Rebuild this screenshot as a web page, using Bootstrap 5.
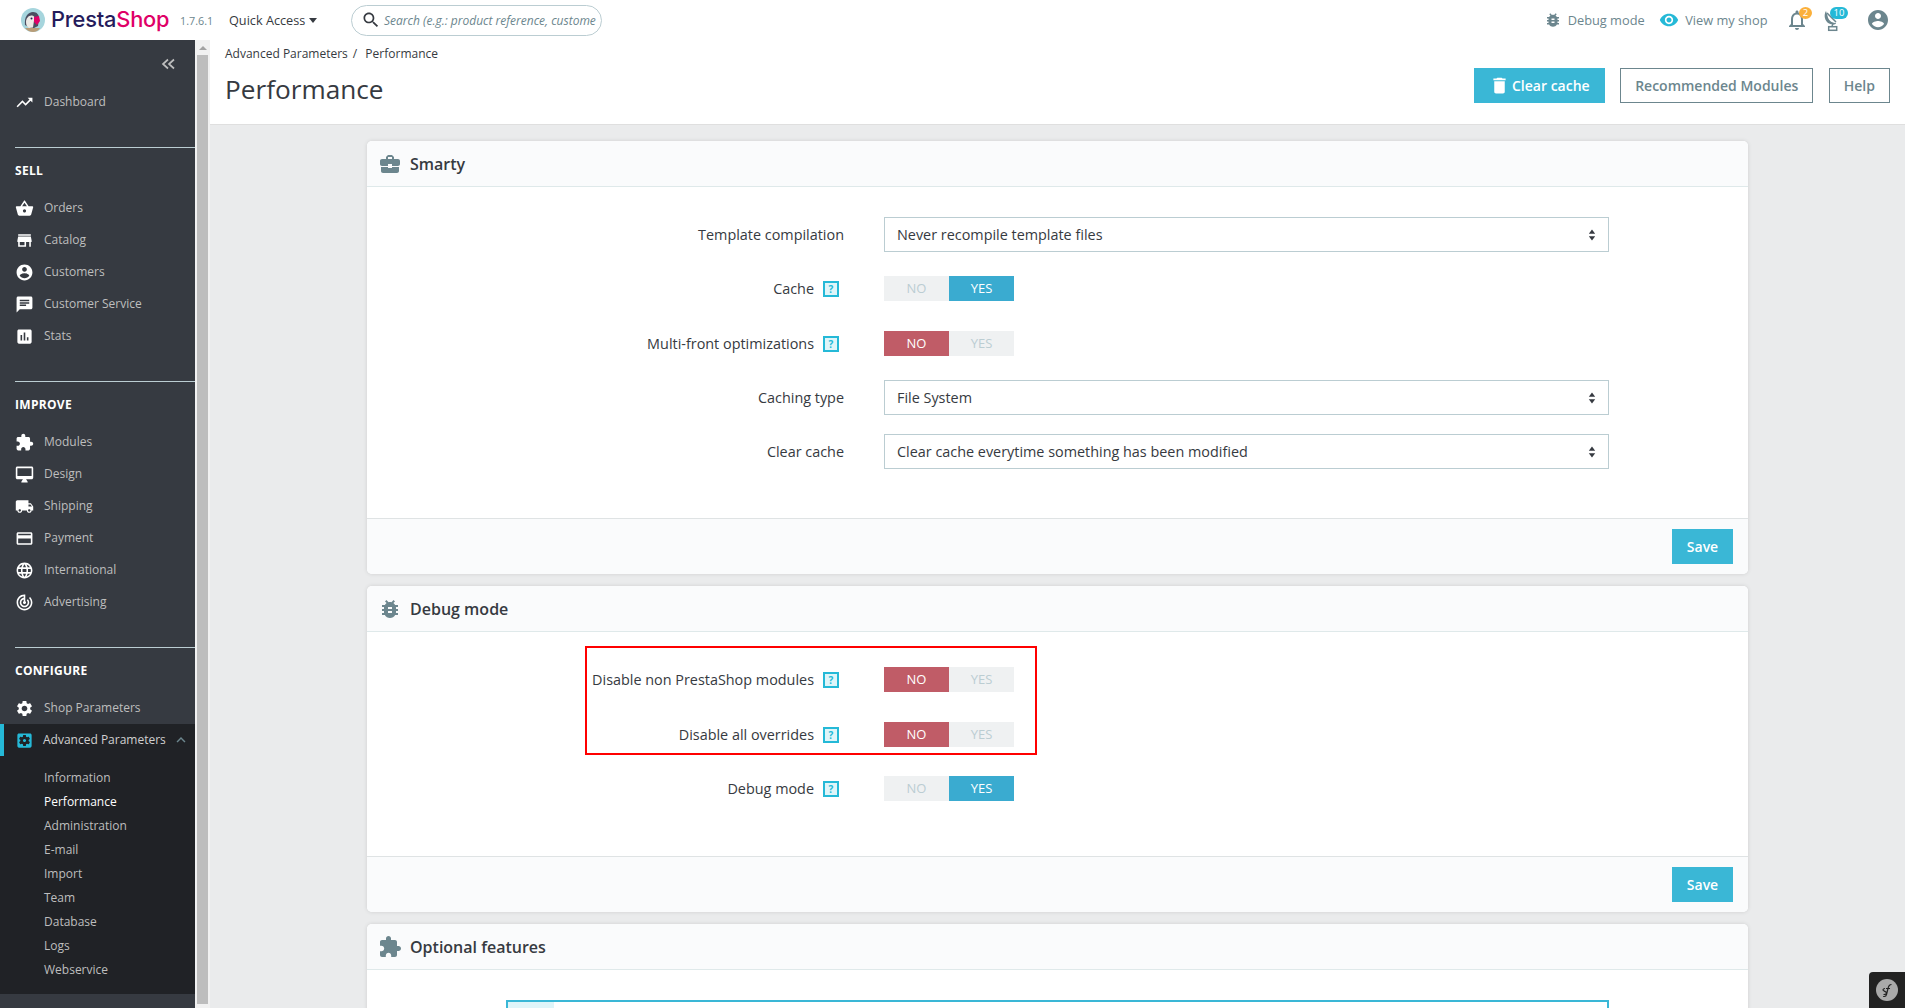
<!DOCTYPE html>
<html lang="en">
<head>
<meta charset="utf-8">
<title>Performance</title>
<link href="https://cdn.jsdelivr.net/npm/bootstrap@5.3.0/dist/css/bootstrap.min.css" rel="stylesheet">
<style>
html,body{height:100%;overflow:hidden}
body{font-family:"Open Sans","Liberation Sans",sans-serif;font-size:14px;color:#363a41;background:#eaebec}
.ic{width:1em;height:1em;fill:currentColor;flex:none;display:block}
.pg{height:100vh}
.topbar{height:40px;flex:none;background:#fff;padding-left:21px}
.brand{font-family:"Inter","Open Sans",sans-serif;font-size:21.8px;font-weight:500;line-height:1;margin-left:6px;width:123px;color:#251b5b;letter-spacing:-.2px}
.brand em{font-style:normal;color:#df0067}
.ver{font-size:10.8px;color:#6c868e;margin-left:6px;width:37px;padding-top:3px}
.quick{font-size:12.7px;color:#363a41;margin-left:12px;width:122px;padding-top:2px}
.caretx{display:inline-block;border:4.5px solid transparent;border-top:5px solid #363a41;border-bottom:0;margin-left:4px;vertical-align:2px}
.srch{width:251px;height:31px;border:1px solid #bbcdd2;border-radius:16px;padding:0 6px 0 9px;white-space:nowrap}
.srch svg{font-size:20px;color:#363a41;margin-right:3px}
.srch span{font-style:italic;font-size:12px;color:#6c868e;padding-top:2px}
.topr{font-size:12.8px;color:#6c868e}
.topr .tic{font-size:18px;margin-top:-2px}
.dbg{margin-right:14.5px;padding-top:2px}
.dbg svg{margin-right:6px}
.shopv{margin-right:17.5px;padding-top:2px}
.shopv svg{color:#25b9d7;margin-right:6px;font-size:20px!important}
.nic{position:relative;width:24px;height:24px;margin-right:11px}
.nic2{margin-right:22px}
.nic svg{font-size:24px}
.bdg{position:absolute;font-size:9.5px;text-align:center;color:#fff;top:-1px;height:12px;line-height:12px}
.bdg1{left:14px;background:#fbb03b;width:13px;border-radius:50%}
.bdg2{left:10px;background:#25b9d7;width:18px;border-radius:6px}
.prof{font-size:24px;color:#6c868e;margin-right:15px}
.side{width:195px;flex:none;background:#363a41;color:#bebebe;font-size:12px;overflow:hidden}
.collapsex{height:44px;padding:14px 19px 0 0;text-align:right;color:#bebebe}
.collapsex svg{font-size:16px;display:inline-block}
.sitem{height:32px;display:flex;align-items:center;padding-left:16px}
.sitem svg{font-size:19px;color:#fff;margin-right:10px;margin-left:-1px}
.sitem span{color:#bebebe}
.sdash{margin-top:2px;margin-bottom:29px}
.ssec{margin-left:15px;border-top:1px solid #bbcdd2;padding-top:14px;height:44px;margin-bottom:1px;color:#fff;font-weight:700;font-size:12px;letter-spacing:.3px}
.sgrp{margin-bottom:29px}
.sgrp2{margin-bottom:29px}
.sact{background:#202226;padding-bottom:12px}
.sacth{height:32px;display:flex;align-items:center;border-left:4px solid #25b9d7;padding-left:12px}
.sacth svg.m{font-size:19px;color:#25b9d7;margin-right:9px;margin-left:-1px}
.sacth span{flex:1;color:#d0d0d0;white-space:nowrap}
.sacth svg.u{font-size:18px;color:#6c868e;margin-right:5px}
.ssub{height:24px;line-height:24px;padding-left:44px;color:#bebebe}
.ssubf{margin-top:10px}
.ssub.on{color:#fff}
.sbar{width:15px;flex:none;background:#f1f1f1;padding:0 2px}
.sarrow{height:15px;display:flex;align-items:center;justify-content:center}
.sarrow i{display:block;border:4px solid transparent;border-bottom:4px solid #a3a3a3;border-top:0}
.sthumb{height:949px;background:#bdbdbd}
.mainx{min-width:0;overflow:hidden}
.phead{height:85px;flex:none;background:#fff;border-bottom:1px solid #dfdfdf;padding:0 15px}
.crumb{font-size:12px;line-height:14px;padding-top:7px;color:#363a41}
.crumb i{font-style:normal;padding:0 5px}
.ttl{font-size:26.2px;font-weight:400;line-height:36px;margin:10px 0 0;color:#363a41}
.btnx{height:35px;border-radius:0;font-size:14px;font-weight:600;padding:0 14px;display:inline-flex;align-items:center}
.btnprim{background:#3ab7d6;border:1px solid #3ab7d6;color:#fff}
.btnprim svg{font-size:21px;margin-right:2px}
.btnout{border:1px solid #6c868e;color:#6c868e;background:#fff}
.acts{padding-top:28px;gap:15.5px}
.cwrap{padding:16px 157px 0}
.pcard{border:0;border-radius:5px;box-shadow:0 0 4px rgba(0,0,0,.12);margin-bottom:12px;width:1381px;overflow:hidden}
.pcard .card-header{height:46px;background:#fafbfc;border-bottom:1px solid #dfe9ea;padding:0 0 0 11px;font-size:16px;font-weight:600;color:#363a41;border-radius:0}
.pcard .card-header svg{font-size:24px;color:#6c868e;margin-right:8px}
.pcard .card-footer{height:56px;background:#fafbfc;border-top:1px solid #dfe3e4;padding:0 15px;border-radius:0}
.fbody{padding-top:30px}
.fb1{height:331px}
.fb2{height:224px;padding-top:35px;position:relative}
.frow{display:flex;align-items:center;height:35px;margin-bottom:24px}
.frowt{height:25px;margin-bottom:30px}
.frow.g29{margin-bottom:29px}
.frow.g24{margin-bottom:24px}
.frow.g19{margin-bottom:19px}
.flab{width:477px;flex:none;display:flex;justify-content:flex-end;align-items:center;font-size:14.4px;color:#363a41;white-space:nowrap}
.hlp{width:16px;height:16px;border:2px solid #25b9d7;background:#dff5f9;color:#25b9d7;font-size:10px;font-weight:700;line-height:12px;text-align:center;margin:2px 5px 0 9px;flex:none}
.fctl{margin-left:40px}
.selx{width:725px;height:35px;border:1px solid #bbcdd2;border-radius:0;font-size:14.4px;padding:0 30px 0 12px;color:#363a41;background-position:right 11px center;background-size:10px 14px;background-repeat:no-repeat;background-image:url("data:image/svg+xml,%3Csvg xmlns='http://www.w3.org/2000/svg' viewBox='0 0 10 14'%3E%3Cpath fill='%23363a41' d='M5 1.500l3.200 4.200H1.800zM5 12.500L1.800 8.300h6.400z'/%3E%3C/svg%3E")}
.tog{display:flex;width:130px;height:25px;font-size:13px;text-align:center;line-height:25px}
.tog span{width:65px;background:#eff1f2;color:#bbcdd2}
.tog .yes{background:#3aabd0;color:#fff}
.tog .non{background:#c05c67;color:#fff}
.sbtn{height:35px;background:#3ab7d6;border:0;color:#fff;border-radius:0;font-size:14px;font-weight:600;width:61px;padding:0}
.redbox{position:absolute;left:218px;top:14px;width:452px;height:109px;border:2px solid #f00;pointer-events:none}
.albox{margin:30px 0 0 139px;width:1103px;height:60px;border:2px solid #3ab7d6;background:#fff;display:flex}
.albox i{display:block;width:46px;background:#dff5f9}
.sftb{position:fixed;right:0;bottom:0;width:36px;height:36px;background:#222;border-top-left-radius:4px;display:flex;align-items:center;justify-content:center}
</style>
</head>
<body>
<div class="pg d-flex flex-column">
  <header class="topbar d-flex align-items-center">
    <svg width="24" height="24" viewBox="0 0 24 24" class="flex-none"><circle cx="12" cy="12" r="12" fill="#a6d5dd"/><path d="M4 17C3 9 7 4 12 4c4 0 6 3 6 6l-1 8-6 3z" fill="#4a4d60"/><path d="M5 14c0-4 3-7 6-6.500 3 .5 3 3 2 5l-1 7-4 .5c-2-1-3-3-3-6z" fill="#eceae6"/><path d="M13 9l5-1 1 5-3 4-3-3z" fill="#df0067"/><circle cx="10.500" cy="10.500" r="1" fill="#251b5b"/><path d="M4 20h15c-1.500 2.500-4 4-7 4s-6-1.500-8-4z" fill="#b99d78"/></svg>
    <div class="brand">Presta<em>Shop</em></div>
    <div class="ver">1.7.6.1</div>
    <div class="quick">Quick Access<span class="caretx"></span></div>
    <div class="srch d-flex align-items-center">
      <svg class="ic" viewBox="0 0 24 24"><path d="M15.500 14h-.79l-.28-.27C15.410 12.590 16 11.110 16 9.500 16 5.910 13.090 3 9.500 3S3 5.910 3 9.500 5.910 16 9.500 16c1.610 0 3.090-.59 4.230-1.570l.27.28v.79l5 4.990L20.490 19l-4.990-5zm-6 0C7.010 14 5 11.990 5 9.500S7.010 5 9.500 5 14 7.010 14 9.500 11.990 14 9.500 14z"/></svg>
      <span>Search (e.g.: product reference, custome</span>
    </div>
    <div class="topr ms-auto d-flex align-items-center">
      <div class="dbg d-flex align-items-center"><svg class="ic tic" viewBox="0 0 24 24"><path d="M20 8h-2.810c-.45-.78-1.070-1.450-1.820-1.960L17 4.410 15.590 3l-2.170 2.170C12.960 5.060 12.490 5 12 5c-.49 0-.96.06-1.410.17L8.410 3 7 4.410l1.620 1.630C7.880 6.550 7.260 7.220 6.810 8H4v2h2.090c-.05.33-.09.66-.09 1v1H4v2h2v1c0 .34.04.67.09 1H4v2h2.810c1.040 1.790 2.970 3 5.190 3s4.150-1.210 5.190-3H20v-2h-2.090c.05-.33.09-.66.09-1v-1h2v-2h-2v-1c0-.34-.04-.67-.09-1H20V8zm-6 8h-4v-2h4v2zm0-4h-4v-2h4v2z"/></svg>Debug mode</div>
      <div class="shopv d-flex align-items-center"><svg class="ic tic" viewBox="0 0 24 24"><path d="M12 4.500C7 4.500 2.730 7.610 1 12c1.730 4.390 6 7.500 11 7.500s9.270-3.110 11-7.500c-1.730-4.390-6-7.500-11-7.500zM12 17c-2.760 0-5-2.240-5-5s2.240-5 5-5 5 2.240 5 5-2.240 5-5 5zm0-8c-1.660 0-3 1.340-3 3s1.340 3 3 3 3-1.340 3-3-1.340-3-3-3z"/></svg>View my shop</div>
      <div class="nic"><svg class="ic" viewBox="0 0 24 24"><path d="M12 22c1.100 0 2-.9 2-2h-4c0 1.100.9 2 2 2zm6-6v-5c0-3.070-1.630-5.640-4.500-6.320V4c0-.83-.67-1.500-1.500-1.500s-1.500.67-1.500 1.500v.68C7.640 5.360 6 7.920 6 11v5l-2 2v1h16v-1l-2-2zm-2 1H8v-6c0-2.480 1.510-4.500 4-4.500s4 2.020 4 4.500v6z"/></svg><span class="bdg bdg1">2</span></div>
      <div class="nic nic2"><svg class="ic" viewBox="0 0 24 24"><path d="M6 3C3.500 7 4.500 13 9 15.500c2.500 1.300 4.500 1.300 6.500.5l.7-1.200C12 15.500 8 12 7.600 8z"/><path d="M7 5l9 9M13 16l-1 2" fill="none" stroke="currentColor" stroke-width="1.500"/><rect x="8.700" y="18.700" width="8" height="3.600" fill="none" stroke="currentColor" stroke-width="1.500"/></svg><span class="bdg bdg2">10</span></div>
      <div class="prof"><svg class="ic" viewBox="0 0 24 24"><path d="M12 2C6.480 2 2 6.480 2 12s4.480 10 10 10 10-4.480 10-10S17.520 2 12 2zm0 3c1.660 0 3 1.340 3 3s-1.340 3-3 3-3-1.340-3-3 1.340-3 3-3zm0 14.200c-2.500 0-4.710-1.280-6-3.220.03-1.990 4-3.080 6-3.080 1.990 0 5.970 1.090 6 3.080-1.290 1.940-3.500 3.220-6 3.220z"/></svg></div>
    </div>
  </header>
  <div class="d-flex flex-grow-1 overflow-hidden">
    <nav class="side">
      <div class="collapsex"><svg class="ic" viewBox="0 0 16 16" style="fill:none" stroke="currentColor" stroke-width="1.700"><path d="M8 3.500L3 8l5 4.500M14 3.500L9 8l5 4.500"/></svg></div>
      <div class="sitem sdash"><svg class="ic" viewBox="0 0 24 24"><path d="M16 6l2.290 2.290-4.880 4.880-4-4L2 16.590 3.410 18l6-6 4 4 6.300-6.290L22 12V6z"/></svg><span>Dashboard</span></div>
      <div class="ssec">SELL</div>
      <div class="sgrp">
        <div class="sitem"><svg class="ic" viewBox="0 0 24 24"><path d="M17.210 9l-4.380-6.560c-.19-.28-.51-.42-.83-.42-.32 0-.64.14-.83.43L6.790 9H2c-.55 0-1 .45-1 1 0 .09.01.18.04.27l2.540 9.270c.23.84 1 1.460 1.920 1.460h13c.92 0 1.690-.62 1.930-1.460l2.540-9.270L23 10c0-.55-.45-1-1-1h-4.790zM9 9l3-4.400L15 9H9zm3 8c-1.100 0-2-.9-2-2s.9-2 2-2 2 .9 2 2-.9 2-2 2z"/></svg><span>Orders</span></div>
        <div class="sitem"><svg class="ic" viewBox="0 0 24 24"><path d="M20 4H4v2h16V4zm1 10v-2l-1-5H4l-1 5v2h1v6h10v-6h4v6h2v-6h1zm-9 4H6v-4h6v4z"/></svg><span>Catalog</span></div>
        <div class="sitem"><svg class="ic" viewBox="0 0 24 24"><path d="M12 2C6.480 2 2 6.480 2 12s4.480 10 10 10 10-4.480 10-10S17.520 2 12 2zm0 3c1.660 0 3 1.340 3 3s-1.340 3-3 3-3-1.340-3-3 1.340-3 3-3zm0 14.200c-2.500 0-4.710-1.280-6-3.220.03-1.990 4-3.080 6-3.080 1.990 0 5.970 1.090 6 3.080-1.290 1.940-3.500 3.220-6 3.220z"/></svg><span>Customers</span></div>
        <div class="sitem"><svg class="ic" viewBox="0 0 24 24"><path d="M20 2H4c-1.100 0-1.990.9-1.990 2L2 22l4-4h14c1.100 0 2-.9 2-2V4c0-1.100-.9-2-2-2zM6 9h12v2H6V9zm8 5H6v-2h8v2zm4-6H6V6h12v2z"/></svg><span>Customer Service</span></div>
        <div class="sitem"><svg class="ic" viewBox="0 0 24 24"><path d="M19 3H5c-1.100 0-2 .9-2 2v14c0 1.100.9 2 2 2h14c1.100 0 2-.9 2-2V5c0-1.100-.9-2-2-2zM9 17H7v-7h2v7zm4 0h-2V7h2v10zm4 0h-2v-4h2v4z"/></svg><span>Stats</span></div>
      </div>
      <div class="ssec">IMPROVE</div>
      <div class="sgrp2">
        <div class="sitem"><svg class="ic" viewBox="0 0 24 24"><path d="M20.500 11H19V7c0-1.100-.9-2-2-2h-4V3.500C13 2.120 11.880 1 10.500 1S8 2.120 8 3.500V5H4c-1.100 0-1.990.9-1.990 2v3.800H3.500c1.490 0 2.700 1.210 2.700 2.700s-1.210 2.700-2.700 2.700H2V20c0 1.100.9 2 2 2h3.800v-1.500c0-1.490 1.210-2.700 2.700-2.700 1.490 0 2.700 1.210 2.700 2.700V22H17c1.100 0 2-.9 2-2v-4h1.500c1.380 0 2.500-1.120 2.500-2.500S21.880 11 20.500 11z"/></svg><span>Modules</span></div>
        <div class="sitem"><svg class="ic" viewBox="0 0 24 24"><path d="M21 2H3c-1.100 0-2 .9-2 2v12c0 1.100.9 2 2 2h7l-2 3v1h8v-1l-2-3h7c1.100 0 2-.9 2-2V4c0-1.100-.9-2-2-2zm0 12H3V4h18v10z"/></svg><span>Design</span></div>
        <div class="sitem"><svg class="ic" viewBox="0 0 24 24"><path d="M20 8h-3V4H3c-1.100 0-2 .9-2 2v11h2c0 1.660 1.340 3 3 3s3-1.340 3-3h6c0 1.660 1.340 3 3 3s3-1.340 3-3h2v-5l-3-4zM6 18.500c-.83 0-1.500-.67-1.500-1.500s.67-1.500 1.500-1.500 1.500.67 1.500 1.500-.67 1.500-1.500 1.500zm13.500-9l1.960 2.500H17V9.500h2.500zm-1.500 9c-.83 0-1.500-.67-1.500-1.500s.67-1.500 1.500-1.500 1.500.67 1.500 1.500-.67 1.500-1.500 1.500z"/></svg><span>Shipping</span></div>
        <div class="sitem"><svg class="ic" viewBox="0 0 24 24"><path d="M20 4H4c-1.110 0-1.990.89-1.990 2L2 18c0 1.110.89 2 2 2h16c1.110 0 2-.89 2-2V6c0-1.110-.89-2-2-2zm0 14H4v-6h16v6zm0-10H4V6h16v2z"/></svg><span>Payment</span></div>
        <div class="sitem"><svg class="ic" viewBox="0 0 24 24"><path d="M11.990 2C6.470 2 2 6.480 2 12s4.470 10 9.990 10C17.520 22 22 17.520 22 12S17.520 2 11.990 2zm6.930 6h-2.950c-.32-1.250-.78-2.450-1.380-3.560 1.840.63 3.370 1.910 4.330 3.560zM12 4.040c.83 1.200 1.480 2.530 1.910 3.960h-3.820c.43-1.430 1.080-2.760 1.910-3.960zM4.260 14C4.100 13.360 4 12.690 4 12s.1-1.360.26-2h3.380c-.08.66-.14 1.320-.14 2 0 .68.06 1.340.14 2H4.260zm.82 2h2.950c.32 1.250.78 2.450 1.380 3.560-1.840-.63-3.370-1.900-4.330-3.560zm2.950-8H5.080c.96-1.660 2.490-2.930 4.330-3.560C8.810 5.550 8.350 6.750 8.030 8zM12 19.960c-.83-1.200-1.480-2.530-1.910-3.960h3.820c-.43 1.430-1.080 2.760-1.910 3.960zM14.340 14H9.660c-.09-.66-.16-1.320-.16-2 0-.68.07-1.350.16-2h4.680c.09.65.16 1.320.16 2 0 .68-.07 1.340-.16 2zm.25 5.560c.6-1.110 1.060-2.310 1.380-3.560h2.950c-.96 1.650-2.490 2.930-4.330 3.560zM16.360 14c.08-.66.14-1.320.14-2 0-.68-.06-1.340-.14-2h3.380c.16.64.26 1.310.26 2s-.1 1.360-.26 2h-3.380z"/></svg><span>International</span></div>
        <div class="sitem"><svg class="ic" viewBox="0 0 24 24"><path d="M19.070 4.930l-1.410 1.410C19.100 7.790 20 9.790 20 12c0 4.420-3.580 8-8 8s-8-3.580-8-8c0-4.080 3.050-7.440 7-7.930v2.020C8.160 6.570 6 9.030 6 12c0 3.310 2.690 6 6 6s6-2.690 6-6c0-1.660-.67-3.160-1.760-4.240l-1.410 1.410C15.550 9.900 16 10.900 16 12c0 2.210-1.790 4-4 4s-4-1.790-4-4c0-1.860 1.280-3.410 3-3.860v2.140c-.6.350-1 .98-1 1.720 0 1.100.9 2 2 2s2-.9 2-2c0-.74-.4-1.380-1-1.720V2h-1C6.480 2 2 6.480 2 12s4.480 10 10 10 10-4.480 10-10c0-2.760-1.120-5.260-2.930-7.070z"/></svg><span>Advertising</span></div>
      </div>
      <div class="ssec">CONFIGURE</div>
      <div class="sitem"><svg class="ic" viewBox="0 0 24 24"><path d="M19.140 12.940c.04-.3.06-.61.06-.94 0-.32-.02-.64-.07-.94l2.030-1.580c.18-.14.23-.41.12-.61l-1.920-3.320c-.12-.22-.37-.29-.59-.22l-2.390.96c-.5-.38-1.030-.7-1.620-.94l-.36-2.540c-.04-.24-.24-.41-.48-.41h-3.840c-.24 0-.43.17-.47.41l-.36 2.540c-.59.24-1.130.57-1.620.94l-2.390-.96c-.22-.08-.47 0-.59.22L2.740 8.870c-.12.21-.08.47.12.61l2.030 1.580c-.05.3-.09.63-.09.94s.02.64.07.94l-2.030 1.580c-.18.14-.23.41-.12.61l1.920 3.320c.12.22.37.29.59.22l2.390-.96c.5.38 1.030.7 1.620.94l.36 2.540c.05.24.24.41.48.41h3.840c.24 0 .44-.17.47-.41l.36-2.540c.59-.24 1.130-.56 1.620-.94l2.390.96c.22.08.47 0 .59-.22l1.920-3.320c.12-.22.07-.47-.12-.61l-2.010-1.580zM12 15.600c-1.980 0-3.600-1.620-3.600-3.600s1.620-3.600 3.600-3.600 3.600 1.620 3.600 3.600-1.620 3.600-3.600 3.600z"/></svg><span>Shop Parameters</span></div>
      <div class="sact">
        <div class="sacth"><svg class="ic m" viewBox="0 0 24 24"><path d="M12 10c-1.100 0-2 .9-2 2s.9 2 2 2 2-.9 2-2-.9-2-2-2zm7-7H5c-1.110 0-2 .9-2 2v14c0 1.100.89 2 2 2h14c1.110 0 2-.9 2-2V5c0-1.100-.89-2-2-2zm-1.750 9c0 .23-.02.46-.05.68l1.480 1.160c.13.11.17.3.08.45l-1.400 2.420c-.09.15-.27.21-.43.15l-1.740-.7c-.36.28-.76.51-1.180.69l-.26 1.850c-.03.17-.18.3-.35.3h-2.800c-.17 0-.32-.13-.35-.29l-.26-1.850c-.43-.18-.82-.41-1.180-.69l-1.740.7c-.16.06-.34 0-.43-.15l-1.400-2.420c-.09-.15-.05-.34.08-.45l1.480-1.160c-.03-.23-.05-.46-.05-.69 0-.23.02-.46.05-.68l-1.480-1.160c-.13-.11-.17-.3-.08-.45l1.400-2.420c.09-.15.27-.21.43-.15l1.740.7c.36-.28.76-.51 1.180-.69l.26-1.850c.03-.17.18-.3.35-.3h2.800c.17 0 .32.13.35.29l.26 1.850c.43.18.82.41 1.180.69l1.740-.7c.16-.06.34 0 .43.15l1.400 2.420c.09.15.05.34-.08.45l-1.480 1.160c.03.23.05.46.05.69z"/></svg><span>Advanced Parameters</span><svg class="ic u" viewBox="0 0 24 24"><path d="M7.410 15.410L12 10.830l4.590 4.580L18 14l-6-6-6 6z"/></svg></div>
        <div class="ssub ssubf">Information</div>
        <div class="ssub on">Performance</div>
        <div class="ssub">Administration</div>
        <div class="ssub">E-mail</div>
        <div class="ssub">Import</div>
        <div class="ssub">Team</div>
        <div class="ssub">Database</div>
        <div class="ssub">Logs</div>
        <div class="ssub">Webservice</div>
      </div>
    </nav>
    <div class="sbar"><div class="sarrow"><i></i></div><div class="sthumb"></div></div>
    <main class="mainx flex-grow-1 d-flex flex-column">
      <div class="phead d-flex justify-content-between">
        <div>
          <div class="crumb">Advanced Parameters<i>/</i> Performance</div>
          <h1 class="ttl">Performance</h1>
        </div>
        <div class="acts d-flex align-items-start">
          <a class="btn btnx btnprim"><svg class="ic" viewBox="0 0 24 24"><path d="M6 19c0 1.100.9 2 2 2h8c1.100 0 2-.9 2-2V7H6v12zM19 4h-3.500l-1-1h-5l-1 1H5v2h14V4z"/></svg>Clear cache</a>
          <a class="btn btnx btnout">Recommended Modules</a>
          <a class="btn btnx btnout">Help</a>
        </div>
      </div>
      <div class="cwrap">
        <section class="card pcard">
          <div class="card-header d-flex align-items-center"><svg class="ic" viewBox="0 0 24 24"><path d="M10 16v-1H3.010L3 19c0 1.110.89 2 2 2h14c1.110 0 2-.9 2-2v-4h-7v1h-4zm10-9h-4.010V5l-2-2h-4l-2 2v2H4c-1.100 0-2 .9-2 2v3c0 1.110.89 2 2 2h6v-2h4v2h6c1.100 0 2-.9 2-2V9c0-1.100-.9-2-2-2zm-6 0h-4V5h4v2z"/></svg>Smarty</div>
          <div class="fbody fb1">
            <div class="frow"><div class="flab">Template compilation</div><div class="fctl"><select class="form-select selx"><option>Never recompile template files</option></select></div></div>
            <div class="frow frowt"><div class="flab">Cache<span class="hlp">?</span></div><div class="fctl tog"><span>NO</span><span class="yes">YES</span></div></div>
            <div class="frow frowt g24"><div class="flab">Multi-front optimizations<span class="hlp">?</span></div><div class="fctl tog"><span class="non">NO</span><span>YES</span></div></div>
            <div class="frow g19"><div class="flab">Caching type</div><div class="fctl"><select class="form-select selx"><option>File System</option></select></div></div>
            <div class="frow"><div class="flab">Clear cache</div><div class="fctl"><select class="form-select selx"><option>Clear cache everytime something has been modified</option></select></div></div>
          </div>
          <div class="card-footer d-flex align-items-center justify-content-end"><button class="btn sbtn">Save</button></div>
        </section>
        <section class="card pcard">
          <div class="card-header d-flex align-items-center"><svg class="ic" viewBox="0 0 24 24"><path d="M20 8h-2.810c-.45-.78-1.070-1.450-1.820-1.960L17 4.410 15.590 3l-2.170 2.170C12.960 5.060 12.490 5 12 5c-.49 0-.96.06-1.410.17L8.410 3 7 4.410l1.620 1.630C7.880 6.550 7.260 7.220 6.810 8H4v2h2.090c-.05.33-.09.66-.09 1v1H4v2h2v1c0 .34.04.67.09 1H4v2h2.810c1.040 1.790 2.970 3 5.190 3s4.150-1.210 5.190-3H20v-2h-2.090c.05-.33.09-.66.09-1v-1h2v-2h-2v-1c0-.34-.04-.67-.09-1H20V8zm-6 8h-4v-2h4v2zm0-4h-4v-2h4v2z"/></svg>Debug mode</div>
          <div class="fbody fb2">
            <div class="redbox"></div>
            <div class="frow frowt"><div class="flab">Disable non PrestaShop modules<span class="hlp">?</span></div><div class="fctl tog"><span class="non">NO</span><span>YES</span></div></div>
            <div class="frow frowt g29"><div class="flab">Disable all overrides<span class="hlp">?</span></div><div class="fctl tog"><span class="non">NO</span><span>YES</span></div></div>
            <div class="frow frowt"><div class="flab">Debug mode<span class="hlp">?</span></div><div class="fctl tog"><span>NO</span><span class="yes">YES</span></div></div>
          </div>
          <div class="card-footer d-flex align-items-center justify-content-end"><button class="btn sbtn">Save</button></div>
        </section>
        <section class="card pcard">
          <div class="card-header d-flex align-items-center"><svg class="ic" viewBox="0 0 24 24"><path d="M20.500 11H19V7c0-1.100-.9-2-2-2h-4V3.500C13 2.120 11.880 1 10.500 1S8 2.120 8 3.500V5H4c-1.100 0-1.990.9-1.990 2v3.800H3.500c1.490 0 2.700 1.210 2.700 2.700s-1.210 2.700-2.700 2.700H2V20c0 1.100.9 2 2 2h3.800v-1.500c0-1.490 1.210-2.700 2.700-2.700 1.490 0 2.700 1.210 2.700 2.700V22H17c1.100 0 2-.9 2-2v-4h1.500c1.380 0 2.500-1.120 2.500-2.500S21.880 11 20.500 11z"/></svg>Optional features</div>
          <div class="bg-white"><div class="albox"><i></i></div></div>
        </section>
      </div>
    </main>
  </div>
</div>
<div class="sftb"><svg width="22" height="22" viewBox="0 0 22 22"><circle cx="11" cy="11" r="11" fill="#aaa"/><path d="M15.500 5.500c-2 0-3 1.500-3.500 4l-1.500 6c-.3 1.300-1 2-2 2-.6 0-1-.2-1-.5M9 9.500c-1 0-2 .6-2 1.500s3.500 1.500 3.500 3c0 1-1 1.500-3 1.500M10 9.500h4" fill="none" stroke="#222" stroke-width="1.200"/></svg></div>
</body>
</html>
